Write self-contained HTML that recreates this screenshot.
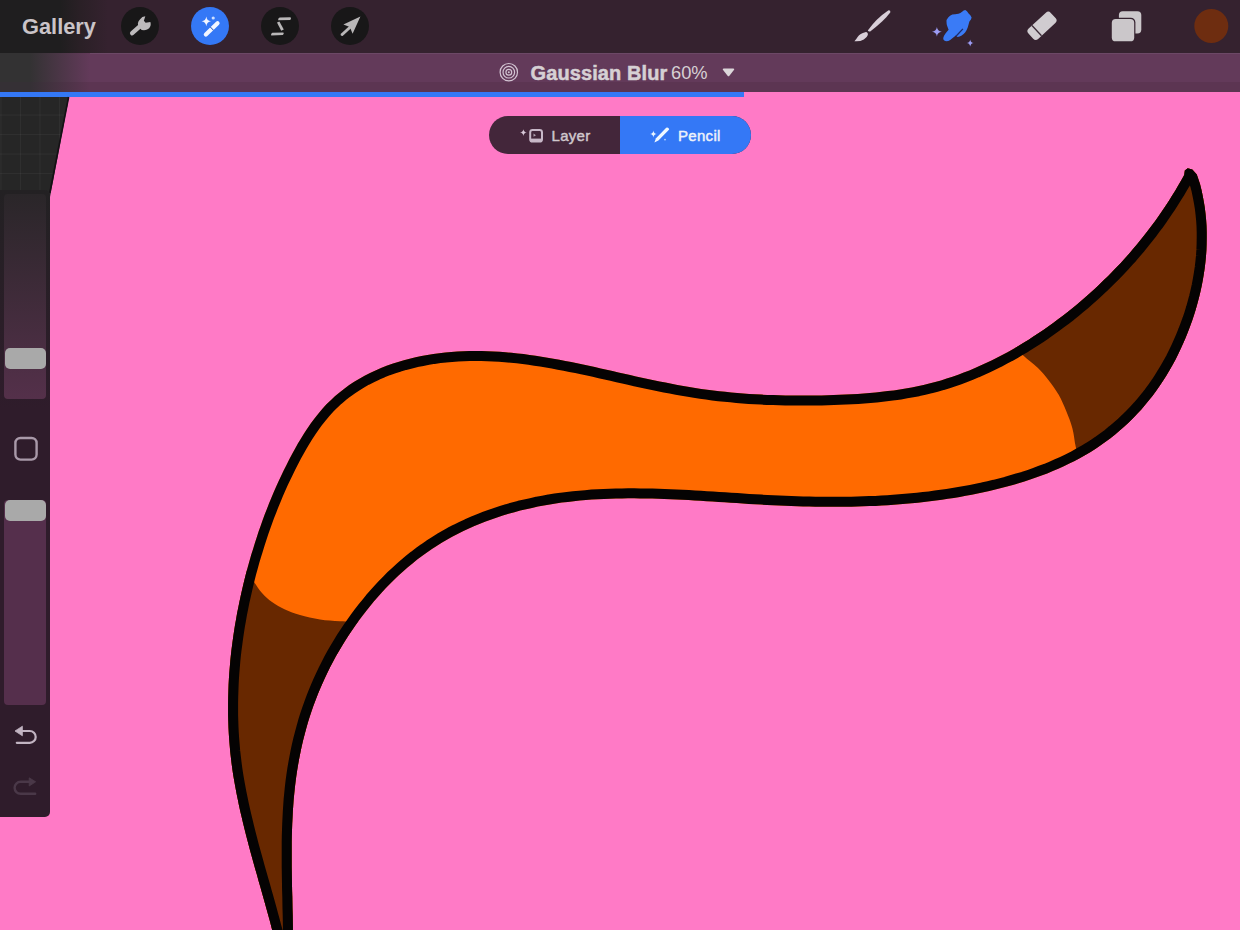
<!DOCTYPE html>
<html><head><meta charset="utf-8">
<style>
html,body{margin:0;padding:0;width:1240px;height:930px;overflow:hidden;background:#ff7ac6;font-family:"Liberation Sans",sans-serif;}
.abs{position:absolute}
#topbar{position:absolute;left:0;top:0;width:1240px;height:53px;background:linear-gradient(90deg,#1f1e1f 0,#1f1e1f 60px,#2a2026 80px,#35222f 108px,#35222f 100%)}
#bar2{position:absolute;left:0;top:53px;width:1240px;height:39px;background:linear-gradient(90deg,#333233 0,#333233 30px,#633a5a 90px,#633a5a 100%)}
#bar2b{position:absolute;left:0;top:82px;width:1240px;height:10px;background:linear-gradient(90deg,#353035 0,#353035 30px,#5c3552 90px,#5c3552 100%)}
#prog{position:absolute;left:0;top:92px;width:744px;height:5px;background:#3478f6}
.circ{position:absolute;width:38px;height:38px;border-radius:50%;top:7px;background:#181718}
#gallery{position:absolute;left:22px;top:13.8px;font-size:21.8px;font-weight:bold;color:#cac4c8}
#grid{position:absolute;left:0;top:97px;width:70px;height:100px;background-color:#262626;
 background-image:linear-gradient(90deg,rgba(255,255,255,0.045) 1px,transparent 1px),linear-gradient(0deg,rgba(255,255,255,0.045) 1px,transparent 1px);
 background-size:19.5px 19.5px;background-position:0.5px -1px;clip-path:polygon(0 0,69px 0,50px 100px,0 100px)}
#side{position:absolute;left:0;top:190px;width:50px;height:627px;border-radius:0 5px 5px 0;background:linear-gradient(180deg,#232123 0,#2f1c2b 220px,#2f1c2b 100%)}
.track{position:absolute;left:4px;width:42px;border-radius:4px}
.thumb{position:absolute;left:5px;width:41px;height:21px;border-radius:5px;background:#a9a9a9}
#pill{position:absolute;left:489px;top:116px;width:262px;height:38px;border-radius:19px;overflow:hidden;background:#43263a}
#pill .r{position:absolute;left:131px;top:0;width:131px;height:38px;background:#3478f6}
.pt{position:absolute;top:10.5px;font-size:15px;font-weight:normal;-webkit-text-stroke:0.45px currentColor;letter-spacing:0.3px}
</style></head><body>

<svg width="1240" height="930" style="position:absolute;left:0;top:0">
<defs><clipPath id="cp"><path d="M276.0,945.0 L274.6,939.1 L273.1,933.3 L271.5,927.5 L270.0,921.6 L268.4,915.8 L266.8,910.0 L265.2,904.2 L263.6,898.4 L261.9,892.5 L260.3,886.7 L258.6,880.9 L257.0,875.1 L255.3,869.3 L253.7,863.5 L252.1,857.7 L250.5,851.9 L248.9,846.0 L247.4,840.2 L245.9,834.4 L244.4,828.5 L243.0,822.7 L241.6,816.8 L240.2,810.9 L238.9,805.0 L237.7,799.1 L236.5,793.2 L235.4,787.3 L234.3,781.3 L233.3,775.4 L232.4,769.4 L231.6,763.4 L230.9,757.4 L230.2,751.4 L229.7,745.4 L229.2,739.4 L228.8,733.4 L228.5,727.4 L228.3,721.3 L228.1,715.3 L228.1,709.3 L228.1,703.2 L228.2,697.2 L228.4,691.2 L228.6,685.1 L228.9,679.1 L229.3,673.1 L229.8,667.1 L230.3,661.1 L230.9,655.1 L231.6,649.1 L232.4,643.1 L233.2,637.1 L234.1,631.1 L235.0,625.2 L236.1,619.2 L237.1,613.3 L238.3,607.4 L239.5,601.4 L240.8,595.5 L242.1,589.7 L243.5,583.8 L244.9,577.9 L246.4,572.1 L248.0,566.3 L249.6,560.4 L251.3,554.6 L253.1,548.9 L254.9,543.1 L256.7,537.4 L258.6,531.6 L260.6,525.9 L262.6,520.3 L264.7,514.6 L266.9,509.0 L269.1,503.3 L271.4,497.8 L273.7,492.2 L276.1,486.7 L278.6,481.2 L281.2,475.7 L283.8,470.3 L286.5,464.9 L289.2,459.5 L292.0,454.2 L294.9,448.9 L297.9,443.6 L301.0,438.4 L304.2,433.3 L307.5,428.3 L310.9,423.3 L314.5,418.4 L318.3,413.7 L322.2,409.1 L326.2,404.6 L330.5,400.4 L334.9,396.3 L339.5,392.4 L344.3,388.7 L349.2,385.1 L354.2,381.8 L359.4,378.7 L364.6,375.7 L370.0,373.0 L375.5,370.4 L381.0,368.0 L386.6,365.8 L392.3,363.8 L398.1,361.9 L403.9,360.2 L409.7,358.7 L415.6,357.3 L421.5,356.1 L427.4,355.0 L433.4,354.0 L439.3,353.2 L445.3,352.5 L451.3,352.0 L457.4,351.5 L463.4,351.2 L469.4,351.0 L475.5,351.0 L481.5,351.0 L487.5,351.2 L493.6,351.4 L499.6,351.8 L505.6,352.3 L511.6,352.8 L517.6,353.4 L523.6,354.1 L529.6,354.9 L535.6,355.8 L541.5,356.7 L547.5,357.7 L553.4,358.7 L559.4,359.8 L565.3,360.9 L571.2,362.1 L577.1,363.3 L583.0,364.6 L588.9,365.8 L594.8,367.1 L600.7,368.4 L606.6,369.7 L612.5,371.1 L618.4,372.4 L624.3,373.7 L630.1,375.1 L636.0,376.4 L641.9,377.7 L647.8,379.0 L653.7,380.2 L659.6,381.4 L665.5,382.6 L671.5,383.8 L677.4,384.9 L683.3,386.0 L689.3,387.0 L695.2,388.0 L701.2,388.9 L707.2,389.7 L713.2,390.5 L719.2,391.2 L725.2,391.8 L731.2,392.4 L737.2,393.0 L743.2,393.5 L749.2,393.9 L755.2,394.3 L761.3,394.6 L767.3,394.9 L773.3,395.1 L779.4,395.3 L785.4,395.4 L791.4,395.5 L797.5,395.6 L803.5,395.6 L809.5,395.5 L815.6,395.5 L821.6,395.4 L827.6,395.2 L833.7,395.0 L839.7,394.8 L845.7,394.6 L851.7,394.2 L857.8,393.9 L863.8,393.5 L869.8,393.0 L875.8,392.5 L881.8,391.8 L887.8,391.1 L893.8,390.4 L899.8,389.5 L905.7,388.5 L911.7,387.4 L917.6,386.3 L923.5,385.0 L929.3,383.6 L935.2,382.0 L941.0,380.4 L946.7,378.6 L952.5,376.7 L958.2,374.7 L963.8,372.6 L969.4,370.4 L975.0,368.1 L980.5,365.6 L986.0,363.1 L991.5,360.5 L996.9,357.8 L1002.2,355.0 L1007.5,352.2 L1012.8,349.2 L1018.0,346.2 L1023.2,343.1 L1028.3,339.9 L1033.4,336.6 L1038.4,333.3 L1043.4,329.9 L1048.3,326.4 L1053.2,322.9 L1058.1,319.3 L1062.9,315.7 L1067.7,312.0 L1072.4,308.2 L1077.0,304.4 L1081.6,300.5 L1086.2,296.5 L1090.7,292.5 L1095.2,288.4 L1099.6,284.3 L1103.9,280.1 L1108.2,275.9 L1112.5,271.6 L1116.6,267.3 L1120.8,262.9 L1124.8,258.4 L1128.9,253.9 L1132.8,249.3 L1136.7,244.7 L1140.5,240.0 L1144.3,235.3 L1148.0,230.6 L1151.6,225.7 L1155.2,220.9 L1158.7,216.0 L1162.1,211.0 L1165.5,206.0 L1168.8,200.9 L1172.0,195.8 L1175.2,190.7 L1178.2,185.5 L1181.3,180.3 L1184.2,175.0 L1184.8,170.5 L1187.7,168.2 L1192.3,169.5 L1196.8,174.4 L1200.0,184.0 L1201.5,189.9 L1202.7,195.8 L1203.8,201.7 L1204.8,207.7 L1205.5,213.7 L1206.1,219.7 L1206.5,225.7 L1206.7,231.8 L1206.7,237.8 L1206.6,243.9 L1206.4,249.9 L1206.0,255.9 L1205.4,262.0 L1204.7,268.0 L1203.8,274.0 L1202.8,279.9 L1201.7,285.8 L1200.4,291.8 L1199.0,297.6 L1197.4,303.5 L1195.8,309.3 L1194.0,315.1 L1192.1,320.8 L1190.0,326.5 L1187.9,332.1 L1185.6,337.8 L1183.2,343.3 L1180.7,348.8 L1178.1,354.3 L1175.4,359.7 L1172.5,365.0 L1169.5,370.2 L1166.4,375.4 L1163.2,380.5 L1159.9,385.6 L1156.4,390.5 L1152.8,395.4 L1149.1,400.1 L1145.2,404.8 L1141.3,409.4 L1137.2,413.8 L1133.0,418.2 L1128.7,422.4 L1124.3,426.5 L1119.7,430.5 L1115.1,434.4 L1110.4,438.2 L1105.5,441.8 L1100.6,445.3 L1095.6,448.7 L1090.5,451.9 L1085.3,455.0 L1080.0,458.0 L1074.7,460.9 L1069.3,463.6 L1063.8,466.2 L1058.3,468.7 L1052.8,471.1 L1047.2,473.4 L1041.5,475.5 L1035.9,477.6 L1030.2,479.6 L1024.4,481.5 L1018.6,483.2 L1012.8,484.9 L1007.0,486.6 L1001.2,488.1 L995.3,489.6 L989.4,490.9 L983.5,492.3 L977.6,493.5 L971.7,494.7 L965.7,495.8 L959.8,496.9 L953.8,497.9 L947.8,498.8 L941.9,499.7 L935.9,500.5 L929.9,501.3 L923.9,502.0 L917.9,502.7 L911.8,503.3 L905.8,503.8 L899.8,504.3 L893.8,504.8 L887.7,505.2 L881.7,505.5 L875.7,505.9 L869.6,506.1 L863.6,506.3 L857.5,506.5 L851.5,506.7 L845.5,506.7 L839.4,506.8 L833.4,506.8 L827.3,506.8 L821.3,506.8 L815.2,506.7 L809.2,506.5 L803.1,506.4 L797.1,506.2 L791.1,506.0 L785.0,505.8 L779.0,505.5 L772.9,505.2 L766.9,504.9 L760.9,504.6 L754.8,504.2 L748.8,503.9 L742.8,503.5 L736.7,503.1 L730.7,502.7 L724.7,502.3 L718.6,501.9 L712.6,501.5 L706.6,501.2 L700.5,500.8 L694.5,500.4 L688.5,500.1 L682.4,499.8 L676.4,499.5 L670.3,499.2 L664.3,499.0 L658.3,498.8 L652.2,498.6 L646.2,498.5 L640.1,498.4 L634.1,498.3 L628.0,498.3 L622.0,498.4 L616.0,498.5 L609.9,498.7 L603.9,498.9 L597.8,499.2 L591.8,499.6 L585.8,500.1 L579.7,500.6 L573.7,501.2 L567.7,501.9 L561.7,502.6 L555.7,503.5 L549.8,504.4 L543.8,505.5 L537.9,506.6 L532.0,507.9 L526.1,509.2 L520.2,510.6 L514.4,512.2 L508.5,513.8 L502.8,515.6 L497.0,517.5 L491.3,519.5 L485.6,521.5 L480.0,523.8 L474.4,526.1 L468.9,528.5 L463.4,531.1 L458.0,533.7 L452.6,536.5 L447.3,539.5 L442.1,542.5 L437.0,545.7 L431.9,549.0 L426.9,552.4 L422.0,555.9 L417.2,559.6 L412.5,563.4 L407.8,567.2 L403.3,571.2 L398.8,575.3 L394.4,579.4 L390.1,583.7 L385.9,588.0 L381.8,592.5 L377.8,597.0 L373.8,601.5 L370.0,606.2 L366.2,610.9 L362.5,615.7 L358.9,620.5 L355.3,625.5 L351.9,630.4 L348.5,635.5 L345.3,640.5 L342.1,645.7 L339.0,650.9 L336.0,656.1 L333.1,661.4 L330.3,666.8 L327.6,672.2 L325.0,677.7 L322.5,683.2 L320.1,688.7 L317.8,694.3 L315.6,699.9 L313.5,705.6 L311.5,711.3 L309.6,717.0 L307.8,722.8 L306.2,728.6 L304.6,734.5 L303.1,740.3 L301.7,746.2 L300.5,752.1 L299.3,758.1 L298.2,764.0 L297.2,770.0 L296.3,775.9 L295.5,781.9 L294.8,787.9 L294.2,794.0 L293.6,800.0 L293.2,806.0 L292.8,812.0 L292.5,818.1 L292.2,824.1 L292.0,830.2 L291.8,836.2 L291.7,842.2 L291.7,848.3 L291.7,854.3 L291.7,860.4 L291.7,866.4 L291.8,872.5 L291.9,878.5 L292.0,884.6 L292.1,890.6 L292.3,896.6 L292.4,902.7 L292.5,908.7 L292.7,914.8 L292.8,920.8 L292.9,926.9 L292.9,932.9 L293.0,939.0 L293.0,945.0 L284.0,960.0Z"/></clipPath></defs>
<g clip-path="url(#cp)">
<rect x="0" y="0" width="1240" height="930" fill="#ff6a00"/>
<path d="M236.0,555.0 C237.7,557.5 243.0,565.5 246.0,570.0 C249.0,574.5 251.3,578.2 254.0,582.0 C256.7,585.8 259.0,589.7 262.0,593.0 C265.0,596.3 268.2,599.2 272.0,602.0 C275.8,604.8 280.3,607.3 285.0,609.5 C289.7,611.7 294.2,613.3 300.0,615.0 C305.8,616.7 313.3,618.5 320.0,619.5 C326.7,620.5 333.0,620.9 340.0,621.2 C347.0,621.5 358.3,621.5 362.0,621.5 L420,640 L420,960 L180,960 L180,540 Z" fill="#682800"/>
<path d="M1010.0,342.0 C1012.2,344.3 1018.7,351.3 1023.3,355.6 C1027.9,359.9 1033.5,363.7 1037.7,367.7 C1041.9,371.7 1044.7,375.2 1048.2,379.7 C1051.7,384.2 1055.7,389.5 1058.7,394.8 C1061.7,400.1 1064.0,405.8 1066.3,411.3 C1068.6,416.8 1070.8,422.4 1072.3,427.9 C1073.8,433.4 1074.5,440.5 1075.3,444.5 C1076.0,448.5 1076.3,447.8 1076.8,452.0 C1077.2,456.2 1077.8,467.0 1078.0,470.0 L1090,490 L1260,490 L1260,100 L1000,100 Z" fill="#682800"/>
<path d="M276.0,945.0 L274.6,939.1 L273.1,933.3 L271.5,927.5 L270.0,921.6 L268.4,915.8 L266.8,910.0 L265.2,904.2 L263.6,898.4 L261.9,892.5 L260.3,886.7 L258.6,880.9 L257.0,875.1 L255.3,869.3 L253.7,863.5 L252.1,857.7 L250.5,851.9 L248.9,846.0 L247.4,840.2 L245.9,834.4 L244.4,828.5 L243.0,822.7 L241.6,816.8 L240.2,810.9 L238.9,805.0 L237.7,799.1 L236.5,793.2 L235.4,787.3 L234.3,781.3 L233.3,775.4 L232.4,769.4 L231.6,763.4 L230.9,757.4 L230.2,751.4 L229.7,745.4 L229.2,739.4 L228.8,733.4 L228.5,727.4 L228.3,721.3 L228.1,715.3 L228.1,709.3 L228.1,703.2 L228.2,697.2 L228.4,691.2 L228.6,685.1 L228.9,679.1 L229.3,673.1 L229.8,667.1 L230.3,661.1 L230.9,655.1 L231.6,649.1 L232.4,643.1 L233.2,637.1 L234.1,631.1 L235.0,625.2 L236.1,619.2 L237.1,613.3 L238.3,607.4 L239.5,601.4 L240.8,595.5 L242.1,589.7 L243.5,583.8 L244.9,577.9 L246.4,572.1 L248.0,566.3 L249.6,560.4 L251.3,554.6 L253.1,548.9 L254.9,543.1 L256.7,537.4 L258.6,531.6 L260.6,525.9 L262.6,520.3 L264.7,514.6 L266.9,509.0 L269.1,503.3 L271.4,497.8 L273.7,492.2 L276.1,486.7 L278.6,481.2 L281.2,475.7 L283.8,470.3 L286.5,464.9 L289.2,459.5 L292.0,454.2 L294.9,448.9 L297.9,443.6 L301.0,438.4 L304.2,433.3 L307.5,428.3 L310.9,423.3 L314.5,418.4 L318.3,413.7 L322.2,409.1 L326.2,404.6 L330.5,400.4 L334.9,396.3 L339.5,392.4 L344.3,388.7 L349.2,385.1 L354.2,381.8 L359.4,378.7 L364.6,375.7 L370.0,373.0 L375.5,370.4 L381.0,368.0 L386.6,365.8 L392.3,363.8 L398.1,361.9 L403.9,360.2 L409.7,358.7 L415.6,357.3 L421.5,356.1 L427.4,355.0 L433.4,354.0 L439.3,353.2 L445.3,352.5 L451.3,352.0 L457.4,351.5 L463.4,351.2 L469.4,351.0 L475.5,351.0 L481.5,351.0 L487.5,351.2 L493.6,351.4 L499.6,351.8 L505.6,352.3 L511.6,352.8 L517.6,353.4 L523.6,354.1 L529.6,354.9 L535.6,355.8 L541.5,356.7 L547.5,357.7 L553.4,358.7 L559.4,359.8 L565.3,360.9 L571.2,362.1 L577.1,363.3 L583.0,364.6 L588.9,365.8 L594.8,367.1 L600.7,368.4 L606.6,369.7 L612.5,371.1 L618.4,372.4 L624.3,373.7 L630.1,375.1 L636.0,376.4 L641.9,377.7 L647.8,379.0 L653.7,380.2 L659.6,381.4 L665.5,382.6 L671.5,383.8 L677.4,384.9 L683.3,386.0 L689.3,387.0 L695.2,388.0 L701.2,388.9 L707.2,389.7 L713.2,390.5 L719.2,391.2 L725.2,391.8 L731.2,392.4 L737.2,393.0 L743.2,393.5 L749.2,393.9 L755.2,394.3 L761.3,394.6 L767.3,394.9 L773.3,395.1 L779.4,395.3 L785.4,395.4 L791.4,395.5 L797.5,395.6 L803.5,395.6 L809.5,395.5 L815.6,395.5 L821.6,395.4 L827.6,395.2 L833.7,395.0 L839.7,394.8 L845.7,394.6 L851.7,394.2 L857.8,393.9 L863.8,393.5 L869.8,393.0 L875.8,392.5 L881.8,391.8 L887.8,391.1 L893.8,390.4 L899.8,389.5 L905.7,388.5 L911.7,387.4 L917.6,386.3 L923.5,385.0 L929.3,383.6 L935.2,382.0 L941.0,380.4 L946.7,378.6 L952.5,376.7 L958.2,374.7 L963.8,372.6 L969.4,370.4 L975.0,368.1 L980.5,365.6 L986.0,363.1 L991.5,360.5 L996.9,357.8 L1002.2,355.0 L1007.5,352.2 L1012.8,349.2 L1018.0,346.2 L1023.2,343.1 L1028.3,339.9 L1033.4,336.6 L1038.4,333.3 L1043.4,329.9 L1048.3,326.4 L1053.2,322.9 L1058.1,319.3 L1062.9,315.7 L1067.7,312.0 L1072.4,308.2 L1077.0,304.4 L1081.6,300.5 L1086.2,296.5 L1090.7,292.5 L1095.2,288.4 L1099.6,284.3 L1103.9,280.1 L1108.2,275.9 L1112.5,271.6 L1116.6,267.3 L1120.8,262.9 L1124.8,258.4 L1128.9,253.9 L1132.8,249.3 L1136.7,244.7 L1140.5,240.0 L1144.3,235.3 L1148.0,230.6 L1151.6,225.7 L1155.2,220.9 L1158.7,216.0 L1162.1,211.0 L1165.5,206.0 L1168.8,200.9 L1172.0,195.8 L1175.2,190.7 L1178.2,185.5 L1181.3,180.3 L1184.2,175.0 L1184.8,170.5 L1187.7,168.2 L1192.3,169.5 L1196.8,174.4 L1200.0,184.0 L1201.5,189.9 L1202.7,195.8 L1203.8,201.7 L1204.8,207.7 L1205.5,213.7 L1206.1,219.7 L1206.5,225.7 L1206.7,231.8 L1206.7,237.8 L1206.6,243.9 L1206.4,249.9 L1206.0,255.9 L1205.4,262.0 L1204.7,268.0 L1203.8,274.0 L1202.8,279.9 L1201.7,285.8 L1200.4,291.8 L1199.0,297.6 L1197.4,303.5 L1195.8,309.3 L1194.0,315.1 L1192.1,320.8 L1190.0,326.5 L1187.9,332.1 L1185.6,337.8 L1183.2,343.3 L1180.7,348.8 L1178.1,354.3 L1175.4,359.7 L1172.5,365.0 L1169.5,370.2 L1166.4,375.4 L1163.2,380.5 L1159.9,385.6 L1156.4,390.5 L1152.8,395.4 L1149.1,400.1 L1145.2,404.8 L1141.3,409.4 L1137.2,413.8 L1133.0,418.2 L1128.7,422.4 L1124.3,426.5 L1119.7,430.5 L1115.1,434.4 L1110.4,438.2 L1105.5,441.8 L1100.6,445.3 L1095.6,448.7 L1090.5,451.9 L1085.3,455.0 L1080.0,458.0 L1074.7,460.9 L1069.3,463.6 L1063.8,466.2 L1058.3,468.7 L1052.8,471.1 L1047.2,473.4 L1041.5,475.5 L1035.9,477.6 L1030.2,479.6 L1024.4,481.5 L1018.6,483.2 L1012.8,484.9 L1007.0,486.6 L1001.2,488.1 L995.3,489.6 L989.4,490.9 L983.5,492.3 L977.6,493.5 L971.7,494.7 L965.7,495.8 L959.8,496.9 L953.8,497.9 L947.8,498.8 L941.9,499.7 L935.9,500.5 L929.9,501.3 L923.9,502.0 L917.9,502.7 L911.8,503.3 L905.8,503.8 L899.8,504.3 L893.8,504.8 L887.7,505.2 L881.7,505.5 L875.7,505.9 L869.6,506.1 L863.6,506.3 L857.5,506.5 L851.5,506.7 L845.5,506.7 L839.4,506.8 L833.4,506.8 L827.3,506.8 L821.3,506.8 L815.2,506.7 L809.2,506.5 L803.1,506.4 L797.1,506.2 L791.1,506.0 L785.0,505.8 L779.0,505.5 L772.9,505.2 L766.9,504.9 L760.9,504.6 L754.8,504.2 L748.8,503.9 L742.8,503.5 L736.7,503.1 L730.7,502.7 L724.7,502.3 L718.6,501.9 L712.6,501.5 L706.6,501.2 L700.5,500.8 L694.5,500.4 L688.5,500.1 L682.4,499.8 L676.4,499.5 L670.3,499.2 L664.3,499.0 L658.3,498.8 L652.2,498.6 L646.2,498.5 L640.1,498.4 L634.1,498.3 L628.0,498.3 L622.0,498.4 L616.0,498.5 L609.9,498.7 L603.9,498.9 L597.8,499.2 L591.8,499.6 L585.8,500.1 L579.7,500.6 L573.7,501.2 L567.7,501.9 L561.7,502.6 L555.7,503.5 L549.8,504.4 L543.8,505.5 L537.9,506.6 L532.0,507.9 L526.1,509.2 L520.2,510.6 L514.4,512.2 L508.5,513.8 L502.8,515.6 L497.0,517.5 L491.3,519.5 L485.6,521.5 L480.0,523.8 L474.4,526.1 L468.9,528.5 L463.4,531.1 L458.0,533.7 L452.6,536.5 L447.3,539.5 L442.1,542.5 L437.0,545.7 L431.9,549.0 L426.9,552.4 L422.0,555.9 L417.2,559.6 L412.5,563.4 L407.8,567.2 L403.3,571.2 L398.8,575.3 L394.4,579.4 L390.1,583.7 L385.9,588.0 L381.8,592.5 L377.8,597.0 L373.8,601.5 L370.0,606.2 L366.2,610.9 L362.5,615.7 L358.9,620.5 L355.3,625.5 L351.9,630.4 L348.5,635.5 L345.3,640.5 L342.1,645.7 L339.0,650.9 L336.0,656.1 L333.1,661.4 L330.3,666.8 L327.6,672.2 L325.0,677.7 L322.5,683.2 L320.1,688.7 L317.8,694.3 L315.6,699.9 L313.5,705.6 L311.5,711.3 L309.6,717.0 L307.8,722.8 L306.2,728.6 L304.6,734.5 L303.1,740.3 L301.7,746.2 L300.5,752.1 L299.3,758.1 L298.2,764.0 L297.2,770.0 L296.3,775.9 L295.5,781.9 L294.8,787.9 L294.2,794.0 L293.6,800.0 L293.2,806.0 L292.8,812.0 L292.5,818.1 L292.2,824.1 L292.0,830.2 L291.8,836.2 L291.7,842.2 L291.7,848.3 L291.7,854.3 L291.7,860.4 L291.7,866.4 L291.8,872.5 L291.9,878.5 L292.0,884.6 L292.1,890.6 L292.3,896.6 L292.4,902.7 L292.5,908.7 L292.7,914.8 L292.8,920.8 L292.9,926.9 L292.9,932.9 L293.0,939.0 L293.0,945.0 L284.0,960.0Z" fill="none" stroke="#050303" stroke-width="20" stroke-linejoin="round"/>
</g>
</svg>
<div id="topbar"></div>
<div id="bar2"></div><div id="bar2b"></div><div class="abs" style="left:90px;top:53px;width:1150px;height:1px;background:#6c4866"></div>
<div id="prog"></div>
<div id="gallery">Gallery</div>
<div class="circ" style="left:121px"></div>
<div class="circ" style="left:191px;background:#3478f6"></div>
<div class="circ" style="left:261px"></div>
<div class="circ" style="left:331px"></div>
<div class="abs" style="left:530.5px;top:62px;font-size:20px;font-weight:bold;color:#d6d0d4;-webkit-text-stroke:0.5px #d6d0d4;letter-spacing:0.1px">Gaussian Blur</div>
<div class="abs" style="left:671px;top:62px;font-size:18.3px;color:#d6d0d4">60%</div>
<div id="grid"></div>
<svg width="80" height="200" style="position:absolute;left:0;top:0"><path d="M68.6,97 L49.8,193" stroke="#141014" stroke-width="1.6" fill="none"/></svg>
<svg width="1240" height="100" style="position:absolute;left:0;top:0">
 <!-- wrench -->
 <g transform="translate(140.2,26) rotate(-42)" fill="#bdbabc">
  <rect x="-13" y="-2.2" width="17" height="4.4" rx="2.2"/>
  <path d="M4.5,-6.3 A6.3,6.3 0 1 0 10.3,2.6 L6.2,0 L6.2,-2.6 L10.3,-5 A6.3,6.3 0 0 0 4.5,-6.3Z" transform="translate(0,1.2)"/>
 </g>
 <!-- wand -->
 <g fill="#f2f6ff">
  <g transform="translate(211.7,28.8) rotate(-44)">
   <rect x="-10.2" y="-2.1" width="20.4" height="4.2" rx="2.1"/>
   <rect x="-0.2" y="-2.3" width="0.9" height="4.6" fill="#2a56b8"/>
  </g>
  <path d="M206.3,16.4 Q206.9,20.7 211,21.3 Q206.9,21.9 206.3,26.2 Q205.7,21.9 201.6,21.3 Q205.7,20.7 206.3,16.4Z"/>
  <circle cx="213.2" cy="18" r="1.6" fill="#cfe0ff"/>
 </g>
 <!-- S tool -->
 <g fill="#b9b7b8">
  <path d="M279.6,17.6 L290.5,17.2 Q291.8,18.6 290.2,19.9 L278.2,20.3 Q277.6,18.6 279.6,17.6Z"/>
  <path d="M277,22.4 L279.4,21.6 L283.8,29.6 L281.2,30.8Z"/>
  <path d="M272.3,32.8 L283.4,32.5 Q284.4,33.8 282.8,35.1 L271.2,35.4 Q270.4,33.8 272.3,32.8Z"/>
 </g>
 <!-- arrow -->
 <g fill="#b9b7b8">
  <path d="M360.4,16.6 L343.4,24.4 L349.8,26.9 L352.6,33.8Z"/>
  <path d="M340.6,34 L350.2,25.2 L352.2,27.3 L342.6,36.1 Q340.3,36.3 340.6,34Z"/>
 </g>
 <!-- brush -->
 <g fill="#d9cfd9">
  <path d="M888.2,10.4 Q890.6,10 890.4,12.2 Q884,21 870.2,31.4 Q868.6,31.8 867.8,30.6 Q876,18.5 888.2,10.4Z"/>
  <path d="M867.6,33 Q866.8,31.8 865.2,32.2 Q860.2,33.2 857.6,37 Q856.2,39.4 854.4,41.2 Q859.8,41.8 863.8,39.4 Q867.2,37.4 867.8,35 Q868,33.8 867.6,33Z"/>
 </g>
 <!-- smudge -->
 <g>
  <path d="M943.3,37.8 Q942.8,40.6 946.1,41.2 Q948.5,41.2 950.2,39.9 L955.8,35.6 L957.6,37.1 Q959.8,36.8 961.3,35.8 Q964,34 965.3,32.2 Q967,29.8 967.8,27.3 L969.4,21.5 Q971.4,19.4 971.6,17.6 Q970.6,15 968.6,13.4 Q967,10.8 965.3,10.1 Q963.6,10.4 962.1,11.7 Q960.4,13.2 958.4,13.8 Q955,14.2 952.3,14.6 Q949.8,15.6 948.2,17.4 Q946.4,19.4 946.5,21.5 Q946.5,23.6 947,25.6 L948.6,29.7 Q946.8,31.6 945.3,33.8 Q943.8,35.6 943.3,37.8Z" fill="#3a7bf6"/>
  <path d="M962.9,28.9 L956,36.2" stroke="#1e2c6a" stroke-width="1.3" fill="none"/>
  <path d="M936.9,27 Q937.4,31.2 941.8,31.7 Q937.4,32.2 936.9,36.4 Q936.4,32.2 932,31.7 Q936.4,31.2 936.9,27Z" fill="#9c9cf4"/>
  <path d="M970.2,39.4 Q970.6,42.6 973.8,43 Q970.6,43.4 970.2,46.6 Q969.8,43.4 966.6,43 Q969.8,42.6 970.2,39.4Z" fill="#9c9cf4"/>
 </g>
 <!-- eraser -->
 <g transform="translate(1042,25.8) rotate(-42.7)">
  <rect x="-15.2" y="-7" width="30.4" height="14" rx="3.5" fill="#d0ccd0"/>
  <rect x="-7.8" y="-7" width="1.3" height="14" fill="#3a2a36"/>
 </g>
 <!-- layers -->
 <rect x="1118.9" y="11.2" width="22.4" height="22.3" rx="3.9" fill="#cbc7ca"/>
 <rect x="1110.6" y="17.7" width="24.8" height="24.8" rx="4.6" fill="#35222f"/>
 <rect x="1111.8" y="18.9" width="22.4" height="22.4" rx="3.9" fill="#cbc7ca"/>
 <!-- color -->
 <circle cx="1211.3" cy="26" r="17" fill="#6e2d10"/>
 <!-- blur icon -->
 <g fill="none" stroke="#d2c4d2" stroke-width="1.2">
  <circle cx="508.8" cy="72.2" r="8.7"/>
  <circle cx="508.8" cy="72.2" r="5.8"/>
  <circle cx="508.8" cy="72.2" r="2.9"/>
 </g>
 <circle cx="508.8" cy="72.2" r="1" fill="#d2c4d2"/>
 <!-- triangle -->
 <path d="M723.6,68.4 L733.4,68.4 Q734.8,68.6 734.1,69.8 L729.4,75.8 Q728.5,76.8 727.6,75.8 L722.9,69.8 Q722.2,68.6 723.6,68.4Z" fill="#dcd6da"/>
</svg>

<div id="side">

 <div class="track" style="top:4px;height:205px;background:linear-gradient(180deg,#2a2629 0,#54304a 100%)"></div>
 <div class="thumb" style="top:158px"></div>
 <div class="track" style="top:310px;height:205px;background:#552f4c"></div>
 <div class="thumb" style="top:310px"></div>
</div>
<svg width="60" height="930" style="position:absolute;left:0;top:0">
 <rect x="15.4" y="438" width="21.2" height="21.6" rx="5" fill="none" stroke="#a999a9" stroke-width="2.4"/>
 <path d="M15,731 L22.4,726.2 L22.4,735.8Z" fill="#c2b4c2" stroke="#c2b4c2" stroke-width="0.8" stroke-linejoin="round"/>
 <path d="M22,731 L29.8,731 A5.9,5.9 0 0 1 29.8,742.8 L16.8,742.8" fill="none" stroke="#c2b4c2" stroke-width="2.2" stroke-linecap="round"/>
 <path d="M35.7,781.8 L29.2,777.8 L29.2,786Z" fill="#4a3848" stroke="#4a3848" stroke-width="0.8" stroke-linejoin="round"/>
 <path d="M30,781.8 L20.6,781.8 A6,6 0 0 0 20.6,793.8 L35.2,793.8" fill="none" stroke="#4a3848" stroke-width="2.4" stroke-linecap="round"/>
</svg>
<div id="pill"><div class="r"></div>
<svg width="262" height="38" style="position:absolute;left:0;top:0">
 <g transform="translate(-489,-116)">
  <path d="M523.4,129.2 Q523.8,132.2 526.9,132.6 Q523.8,133 523.4,136 Q523,133 519.9,132.6 Q523,132.2 523.4,129.2Z" fill="#d8c8d8"/>
  <rect x="530.2" y="130" width="11.8" height="11.6" rx="2.4" fill="none" stroke="#c8b8c8" stroke-width="2"/>
  <rect x="530.2" y="138.6" width="11.8" height="3.2" fill="#c8b8c8"/>
  <path d="M533.5,133.6 L536,135.2 L533.5,136.8Z" fill="#b0a0b0"/>
  <path d="M653.4,130.4 Q653.8,133.5 656.9,133.9 Q653.8,134.3 653.4,137.4 Q653,134.3 649.9,133.9 Q653,133.5 653.4,130.4Z" fill="#e8f4ff"/>
  <path d="M666.2,127.8 Q668.6,127 669.2,129.6 L658.4,140.6 L654.4,142.4 L656,138.2Z" fill="#f0f8ff"/>
  <circle cx="665" cy="139.6" r="0.9" fill="#b8d4ff"/>
 </g>
</svg>

 <div class="pt" style="left:62.5px;color:#d0c8cc">Layer</div>
 <div class="pt" style="left:189px;color:#eef2fa">Pencil</div>
</div>
</body></html>
